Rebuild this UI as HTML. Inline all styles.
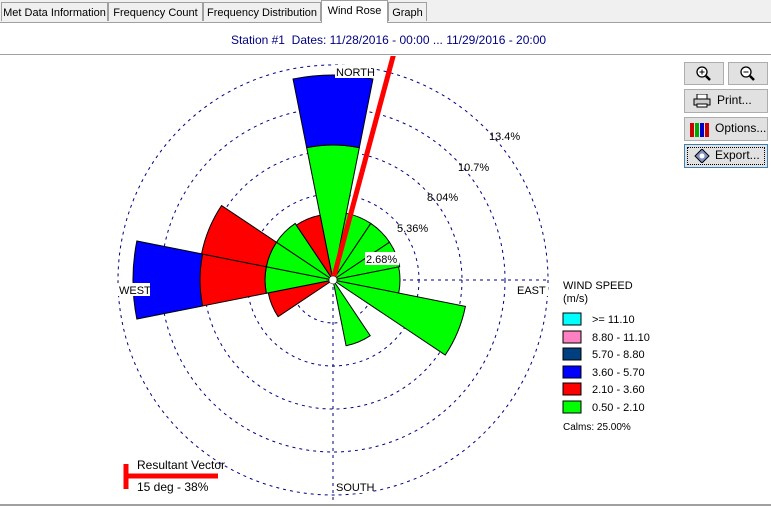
<!DOCTYPE html>
<html><head><style>
body{margin:0;width:771px;height:508px;background:#fff;font-family:"Liberation Sans",sans-serif;font-size:11px;position:relative;overflow:hidden}
.tabs{position:absolute;left:0;top:0;width:771px;height:22px;background:#f0f0f0;border-bottom:1px solid #a0a0a0}
.tab{position:absolute;top:2px;height:19px;border:1px solid #a0a0a0;border-bottom:none;background:#f0f0f0;line-height:20px;text-align:center;font-size:11px;color:#000;white-space:nowrap;overflow:hidden;box-sizing:border-box}
.tab.sel{top:0;height:23px;background:#fff;line-height:20px}
.btn{position:absolute;background:#e1e1e1;border:1px solid #adadad;box-sizing:border-box;font-size:12px;line-height:20px;white-space:nowrap}
</style></head><body>
<div class="tabs">
<div class="tab" style="left:1px;width:107px">Met Data Information</div>
<div class="tab" style="left:108px;width:95px">Frequency Count</div>
<div class="tab" style="left:203px;width:118px">Frequency Distribution</div>
<div class="tab sel" style="left:321px;width:67px">Wind Rose</div>
<div class="tab" style="left:388px;width:39px">Graph</div>
</div>
<div style="position:absolute;left:0;width:771px;top:33px;text-align:center;color:#000080;font-size:12px;padding-left:3px;white-space:nowrap">Station #1&nbsp; Dates: 11/28/2016 - 00:00 ... 11/29/2016 - 20:00</div>
<div style="position:absolute;left:0;top:54px;width:771px;height:1px;background:#a0a0a0"></div>
<div style="position:absolute;left:0;top:504px;width:771px;height:2px;background:#a0a0a0"></div>

<svg style="position:absolute;left:0;top:0" width="771" height="508" font-family="Liberation Sans, sans-serif" font-size="11">
<defs><clipPath id="c"><rect x="0" y="56" width="771" height="447"/></clipPath></defs>
<g clip-path="url(#c)">
<g fill="none" stroke="#000080" stroke-width="1" stroke-dasharray="3,4">
<circle cx="333" cy="280" r="43"/><circle cx="333" cy="280" r="86"/><circle cx="333" cy="280" r="129"/><circle cx="333" cy="280" r="172"/><circle cx="333" cy="280" r="215"/>
<line x1="333" y1="280" x2="548" y2="280"/><line x1="333" y1="280" x2="333" y2="500"/>
</g>
<g id="rose" stroke="#000" stroke-width="1"></g>
<line x1="333" y1="280" x2="398" y2="38" stroke="#f00" stroke-width="5"/>
<circle cx="333" cy="280" r="4" fill="#fff" stroke="#000" stroke-width="0.5"/>
</g>
<g fill="#000">
<rect x="335" y="65" width="36" height="13" fill="#fff"/><text x="336" y="76">NORTH</text>
<rect x="516" y="283" width="32" height="13" fill="#fff"/><text x="517" y="294">EAST</text>
<rect x="117" y="283" width="33" height="13" fill="#fff"/><text x="119" y="294">WEST</text>
<rect x="335" y="480" width="38" height="13" fill="#fff"/><text x="336" y="491">SOUTH</text>
<rect x="365" y="252" width="34" height="13" fill="#fff"/><text x="366" y="263">2.68%</text>
<text x="397" y="232">5.36%</text>
<text x="427" y="201">8.04%</text>
<text x="458" y="171">10.7%</text>
<text x="489" y="140">13.4%</text>
<text x="563" y="289">WIND SPEED</text>
<text x="563" y="302">(m/s)</text>
<rect x="563" y="313" width="18" height="12" fill="#0ff" stroke="#000"/><text x="592" y="323">&gt;= 11.10</text>
<rect x="563" y="331" width="18" height="12" fill="#ff80c0" stroke="#000"/><text x="592" y="341">8.80 - 11.10</text>
<rect x="563" y="348" width="18" height="12" fill="#004080" stroke="#000"/><text x="592" y="358">5.70 - 8.80</text>
<rect x="563" y="366" width="18" height="12" fill="#00f" stroke="#000"/><text x="592" y="376">3.60 - 5.70</text>
<rect x="563" y="383" width="18" height="12" fill="#f00" stroke="#000"/><text x="592" y="393">2.10 - 3.60</text>
<rect x="563" y="401" width="18" height="12" fill="#0f0" stroke="#000"/><text x="592" y="411">0.50 - 2.10</text>
<text x="563" y="430" font-size="10">Calms: 25.00%</text>
<text x="137" y="469" font-size="12">Resultant Vector</text>
<text x="137" y="491" font-size="12">15 deg - 38%</text>
</g>
<line x1="126" y1="464" x2="126" y2="489" stroke="#f00" stroke-width="5"/>
<line x1="126" y1="476" x2="218" y2="476" stroke="#f00" stroke-width="5"/>
</svg>

<div class="btn" style="left:684px;top:62px;width:40px;height:23px"><svg width="38" height="21"><circle cx="17" cy="9" r="5" fill="#fff" stroke="#000" stroke-width="1.3"/><path d="M14.5 9h5M17 6.5v5" stroke="#000"/><path d="M21 13l4 4" stroke="#000" stroke-width="2.5"/></svg></div>
<div class="btn" style="left:728px;top:62px;width:40px;height:23px"><svg width="38" height="21"><circle cx="17" cy="9" r="5" fill="#fff" stroke="#000" stroke-width="1.3"/><path d="M14.5 9h5" stroke="#000"/><path d="M21 13l4 4" stroke="#000" stroke-width="2.5"/></svg></div>
<div class="btn" style="left:684px;top:89px;width:84px;height:24px;padding-left:32px"><svg style="position:absolute;left:8px;top:4px" width="18" height="14"><rect x="4" y="0" width="10" height="5" fill="#fff" stroke="#000"/><rect x="1" y="5" width="16" height="6" fill="#ccc" stroke="#000"/><rect x="4" y="10" width="10" height="3" fill="#fff" stroke="#000"/></svg>Print...</div>
<div class="btn" style="left:684px;top:117px;width:84px;height:24px;padding-left:30px"><svg style="position:absolute;left:4px;top:3px" width="22" height="18"><rect x="1" y="2" width="4" height="14" fill="#c00"/><rect x="6" y="2" width="4" height="14" fill="#0a0"/><rect x="11" y="2" width="4" height="14" fill="#00c"/><rect x="16" y="2" width="4" height="14" fill="#c00"/></svg>Options...</div>
<div class="btn" style="left:684px;top:144px;width:84px;height:24px;padding-left:30px;border-color:#3c7fb1;outline:1px dotted #000;outline-offset:-4px"><svg style="position:absolute;left:9px;top:4px" width="16" height="14"><path d="M8 0L15 7L8 14L1 7Z" fill="#8090c0" stroke="#000"/><circle cx="8" cy="7" r="2.5" fill="#fff"/></svg>Export...</div>

<script>
var d=[[0,[135,0,205]],[22.5,[68]],[45,[68]],[67.5,[68]],[90,[67]],[112.5,[135]],[157.5,[67]],[247.5,[0,66]],[270,[68,133,200]],[292.5,[68,134]],[315,[68]],[337.5,[0,66]]];
var cols=["#00ff00","#ff0000","#0000ff"];
var g=document.getElementById("rose"),s="";
function pt(a,r){a=a*Math.PI/180;return (333+r*Math.sin(a)).toFixed(2)+","+(280-r*Math.cos(a)).toFixed(2);}
d.forEach(function(e){var a=e[0],r0=0;e[1].forEach(function(r,i){if(!r||r<=r0)return;var a1=a-11.25,a2=a+11.25;
s+='<path fill="'+cols[i]+'" d="M'+pt(a1,r0)+' L'+pt(a1,r)+' A'+r+','+r+' 0 0 1 '+pt(a2,r)+' L'+pt(a2,r0)+(r0?' A'+r0+','+r0+' 0 0 0 '+pt(a1,r0):'')+'Z"/>';r0=r;});});
g.innerHTML=s;
</script>
</body></html>
